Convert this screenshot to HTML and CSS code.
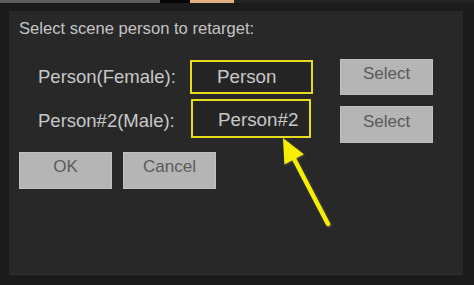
FILE: index.html
```html
<!DOCTYPE html>
<html>
<head>
<meta charset="utf-8">
<link rel="stylesheet" href="styles.css">
</head>
<body>
<div class="strip">
  <div class="strip-gray"></div>
  <div class="strip-black"></div>
  <div class="strip-skin"></div>
  <div class="strip-rest"></div>
</div>
<div class="frame">
  <div class="panel">
    <div class="title">Select scene person to retarget:</div>
    <div class="row row1">
      <div class="label">Person(Female):</div>
      <div class="field field1">Person</div>
      <div class="btn select1">Select</div>
    </div>
    <div class="row row2">
      <div class="label label2">Person#2(Male):</div>
      <div class="field field2">Person#2</div>
      <div class="btn select2">Select</div>
    </div>
    <div class="actions">
      <div class="btn action">OK</div>
      <div class="btn action">Cancel</div>
    </div>
  </div>
</div>
<svg class="arrow" width="474" height="285" viewBox="0 0 474 285">
  <g class="arrow-shape">
    <line x1="328" y1="224" x2="292" y2="155" stroke="#f6f000" stroke-width="4.5" stroke-linecap="round"/>
    <polygon points="283,138 303.8,154.2 284.4,164.4" fill="#f6f000"/>
  </g>
</svg>
</body>
</html>
```
FILE: styles.css
```css
html, body {
  margin: 0;
  padding: 0;
}
body {
  width: 474px;
  height: 285px;
  background: #1b1b1b;
  font-family: "Liberation Sans", Arial, sans-serif;
  position: relative;
  overflow: hidden;
}
.strip {
  display: flex;
  height: 3px;
}
.strip-gray { width: 160px; background: #5c5c5c; }
.strip-black { width: 30px; background: #050505; }
.strip-skin { width: 44px; background: #e0b080; }
.strip-rest { flex: 1; background: #222; }
.frame {
  padding: 8px 11px 10px 9px;
}
.panel {
  height: 264px;
  box-sizing: border-box;
  background: #282828;
  border-bottom: 1px solid #333;
  padding: 9px 10px 0 10px;
}
.title {
  color: #c4c4c4;
  font-size: 16.6px;
  line-height: 18px;
  height: 18px;
}
.row {
  display: flex;
  padding-left: 19px;
}
.row1 {
  margin-top: 21px;
  height: 36px;
  align-items: flex-start;
}
.row2 {
  margin-top: 4px;
  height: 44px;
  align-items: flex-start;
}
.label {
  width: 152px;
  color: #c8c8c8;
  font-size: 18.5px;
  line-height: 36px;
}
.label2 {
  line-height: 44px;
}
.field {
  box-sizing: border-box;
  border: 2px solid #e4dc1c;
  background: #252525;
  color: #c8c8c8;
  font-size: 18.8px;
  padding-left: 25px;
}
.field1 {
  width: 123px;
  height: 34px;
  margin-top: 1px;
  line-height: 29px;
}
.field2 {
  width: 120px;
  height: 39px;
  margin-left: 1px;
  line-height: 37px;
}
.btn {
  box-sizing: border-box;
  background: #b5b5b5;
  border: 1px solid #c0c0c0;
  color: #5a5a5a;
  font-size: 17px;
  text-align: center;
}
.select1 {
  width: 93px;
  height: 36px;
  margin-left: 27px;
  line-height: 28px;
}
.select2 {
  width: 93px;
  height: 37px;
  margin-top: 7px;
  margin-left: 29px;
  line-height: 29px;
}
.actions {
  display: flex;
  gap: 11px;
  margin-top: 9px;
}
.action {
  width: 93px;
  height: 37px;
  line-height: 28px;
}
.arrow {
  position: absolute;
  left: 0;
  top: 0;
  pointer-events: none;
}
.arrow-shape {
  filter: drop-shadow(1px 1px 1px rgba(90, 90, 90, 0.8));
}
```
